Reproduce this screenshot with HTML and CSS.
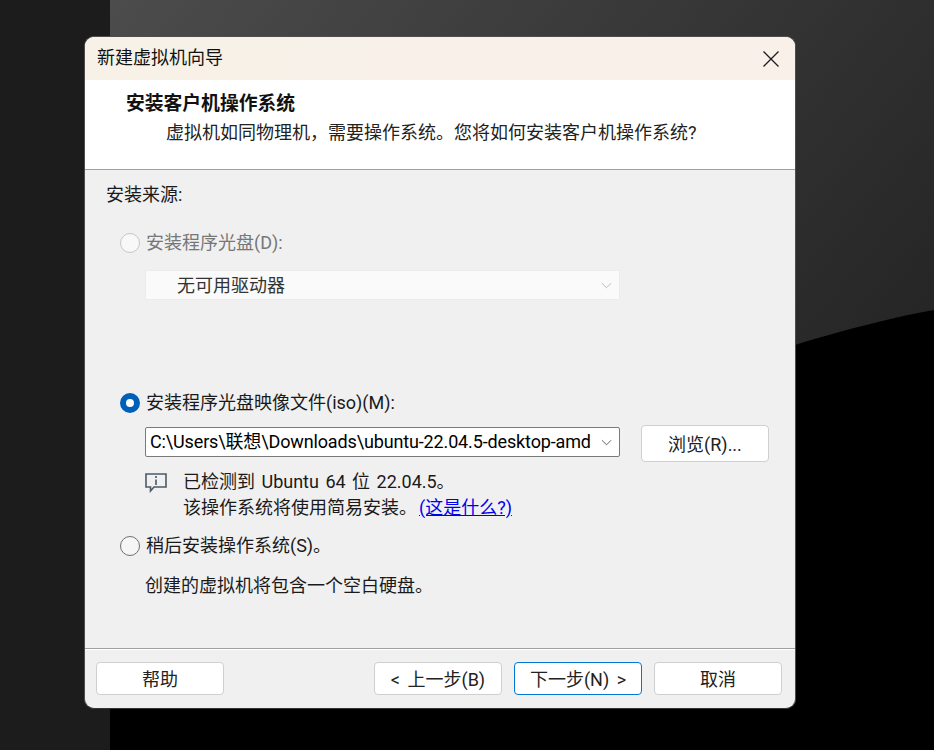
FILE: index.html
```html
<!DOCTYPE html>
<html lang="zh-CN">
<head>
<meta charset="utf-8">
<title>新建虚拟机向导</title>
<link rel="stylesheet" href="styles.css">
</head>
<body>
<div class="desktop">
  <svg class="wallpaper" viewBox="0 0 824 750" preserveAspectRatio="none" aria-hidden="true">
    <defs>
      <linearGradient id="wall" x1="0" y1="0" x2="1" y2="0.75">
        <stop offset="0" stop-color="#4c4c4c"/>
        <stop offset="1" stop-color="#1e1e1e"/>
      </linearGradient>
    </defs>
    <rect width="824" height="750" fill="url(#wall)"/>
    <path d="M0 750V560C220 470 500 400 685 345C740 328 790 316 824 310V750Z" fill="#000"/>
  </svg>
  <div class="dialog">
    <div class="titlebar">
      <span class="title-text">新建虚拟机向导</span>
      <svg class="close" viewBox="0 0 16 16" aria-hidden="true"><path d="M.5.5l15 15M15.500.5l-15 15"/></svg>
    </div>
    <div class="header">
      <div class="header-title">安装客户机操作系统</div>
      <div class="header-sub">虚拟机如同物理机&#xFF0C;需要操作系统。您将如何安装客户机操作系统?</div>
    </div>
    <div class="content">
      <div class="group-label">安装来源:</div>
      <div class="option option-disabled option-disc">
        <span class="radio radio-disabled"></span><span>安装程序光盘(D):</span>
      </div>
      <div class="select select-disabled">
        <span class="select-text">无可用驱动器</span>
        <svg class="chev" viewBox="0 0 12 7" aria-hidden="true"><path d="M1 1l5 5 5-5"/></svg>
      </div>
      <div class="option option-iso">
        <span class="radio radio-on"></span><span>安装程序光盘映像文件(iso)(M):</span>
      </div>
      <div class="iso-row">
        <div class="select select-path">
          <span class="path-text">C:\Users\联想\Downloads\ubuntu-22.04.5-desktop-amd</span>
          <svg class="chev chev-dark" viewBox="0 0 12 7" aria-hidden="true"><path d="M1 1l5 5 5-5"/></svg>
        </div>
        <button class="btn btn-browse" type="button">浏览(R)...</button>
      </div>
      <div class="detected">
        <svg class="info" viewBox="0 0 22 20" aria-hidden="true">
          <path class="info-box" d="M1 1h20v13H9l-3.500 4v-4H1z"/>
          <path class="info-i" d="M11 3v2M11 6.500v5.500"/>
        </svg>
        <div class="detected-text">
          <div>已检测到 Ubuntu 64 位 22.04.5。</div>
          <div>该操作系统将使用简易安装。<a class="what-link" href="#">(这是什么?)</a></div>
        </div>
      </div>
      <div class="option option-later">
        <span class="radio"></span><span>稍后安装操作系统(S)。</span>
      </div>
      <div class="later-note">创建的虚拟机将包含一个空白硬盘。</div>
    </div>
    <div class="footer">
      <button class="btn" type="button">帮助</button>
      <div class="footer-right">
        <button class="btn" type="button">&lt; 上一步(B)</button>
        <button class="btn btn-primary" type="button">下一步(N) &gt;</button>
        <button class="btn" type="button">取消</button>
      </div>
    </div>
  </div>
</div>
</body>
</html>
```

FILE: styles.css
```css
* { box-sizing: border-box; }
html, body { margin: 0; height: 100%; }
body {
  background: #1c1c1c;
  overflow: hidden;
  font-family: Roboto, "Noto Sans CJK SC", sans-serif;
  font-size: 18px;
  color: #1a1a1a;
}
.desktop { position: relative; width: 934px; height: 750px; overflow: hidden; }
.wallpaper { position: absolute; left: 110px; top: 0; width: 824px; height: 750px; }
.dialog {
  position: absolute;
  left: 84px; top: 36px;
  width: 712px; height: 673px;
  display: flex; flex-direction: column;
  border: 1.500px solid #4d4d4d;
  border-bottom-color: #333;
  border-radius: 10px;
  overflow: hidden;
  background: #f0f0f0;
}
.titlebar {
  height: 43px; flex: none;
  display: flex; align-items: center; justify-content: space-between;
  padding: 0 16px 0 12px;
  background: linear-gradient(90deg, #f7f1e7, #f9f0ea);
  color: #111;
}
.title-text { margin-bottom: 2px; line-height: 24px; }
.close { width: 16px; height: 16px; stroke: #1a1a1a; stroke-width: 1.300; fill: none; }
.header {
  height: 90px; flex: none;
  background: #fff;
  border-bottom: 1px solid #a0a0a0;
  padding: 12px 0 0 41px;
}
.header-title { font-size: 18.800px; line-height: 24px; font-weight: 700; color: #111; }
.header-sub { line-height: 26px; margin: 4px 0 0 40px; color: #222; }
.content { flex: 1; padding: 13px 0 0 21px; }
.group-label { line-height: 24px; }
.option { display: flex; align-items: center; gap: 6px; margin-left: 14px; line-height: 24px; }
.option-disc { margin-top: 24px; color: #777; }
.option-iso { margin-top: 91px; }
.option-later { margin-top: 13px; }
.radio {
  width: 20px; height: 20px; flex: none;
  border-radius: 50%;
  border: 1.500px solid #6f6f6f;
  background: #f6f6f6;
}
.radio-disabled { border-color: #c6c6c6; background: #f8f8f8; }
.radio-on { border: 6px solid #0060b8; background: #fff; }
.select {
  width: 475px; height: 30px; flex: none;
  display: flex; align-items: center; justify-content: space-between;
  padding-right: 7px;
}
.select-disabled {
  margin: 15px 0 0 39px;
  background: #fafafa;
  border: 1px solid #ececec;
  color: #333;
}
.select-text { margin: 1px 0 0 31px; line-height: 24px; }
.chev { width: 11px; height: 7px; flex: none; fill: none; stroke: #b5b5b5; stroke-width: 1; }
.chev-dark { stroke: #555; }
.iso-row { display: flex; align-items: flex-start; gap: 21px; margin: 12px 0 0 39px; }
.select-path { background: #fff; border: 1px solid #7a7a7a; border-radius: 2px; }
.path-text { width: 443px; margin-left: 4px; white-space: nowrap; flex: none; color: #000; line-height: 24px; letter-spacing: -0.140px; }
.btn {
  width: 128px; height: 33px;
  background: #fff;
  border: 1px solid #cfcfcf;
  border-radius: 4px;
  font: inherit;
  color: #222;
  padding: 0 0 2px;
  word-spacing: 3px;
}
.btn-browse { height: 37px; margin-top: -2px; }
.btn-primary { border-color: #0078d4; }
.detected { display: flex; margin: 7px 0 0 39px; gap: 16px; word-spacing: 2px; }
.info { width: 22px; height: 20px; margin-top: 4px; flex: none; }
.info-box { fill: none; stroke: #4a5a68; stroke-width: 1.600; }
.info-i { fill: none; stroke: #4a5a68; stroke-width: 1.600; }
.detected-text { line-height: 26px; }
.what-link { color: #0000ee; margin-left: 2px; }
.later-note { margin: 15px 0 0 39px; line-height: 26px; }
.footer {
  height: 60px; flex: none;
  border-top: 1px solid #a0a0a0;
  box-shadow: inset 0 1px 0 #fff;
  display: flex; justify-content: space-between;
  padding: 13px 13px 0 11px;
}
.footer-right { display: flex; gap: 12px; }
```
